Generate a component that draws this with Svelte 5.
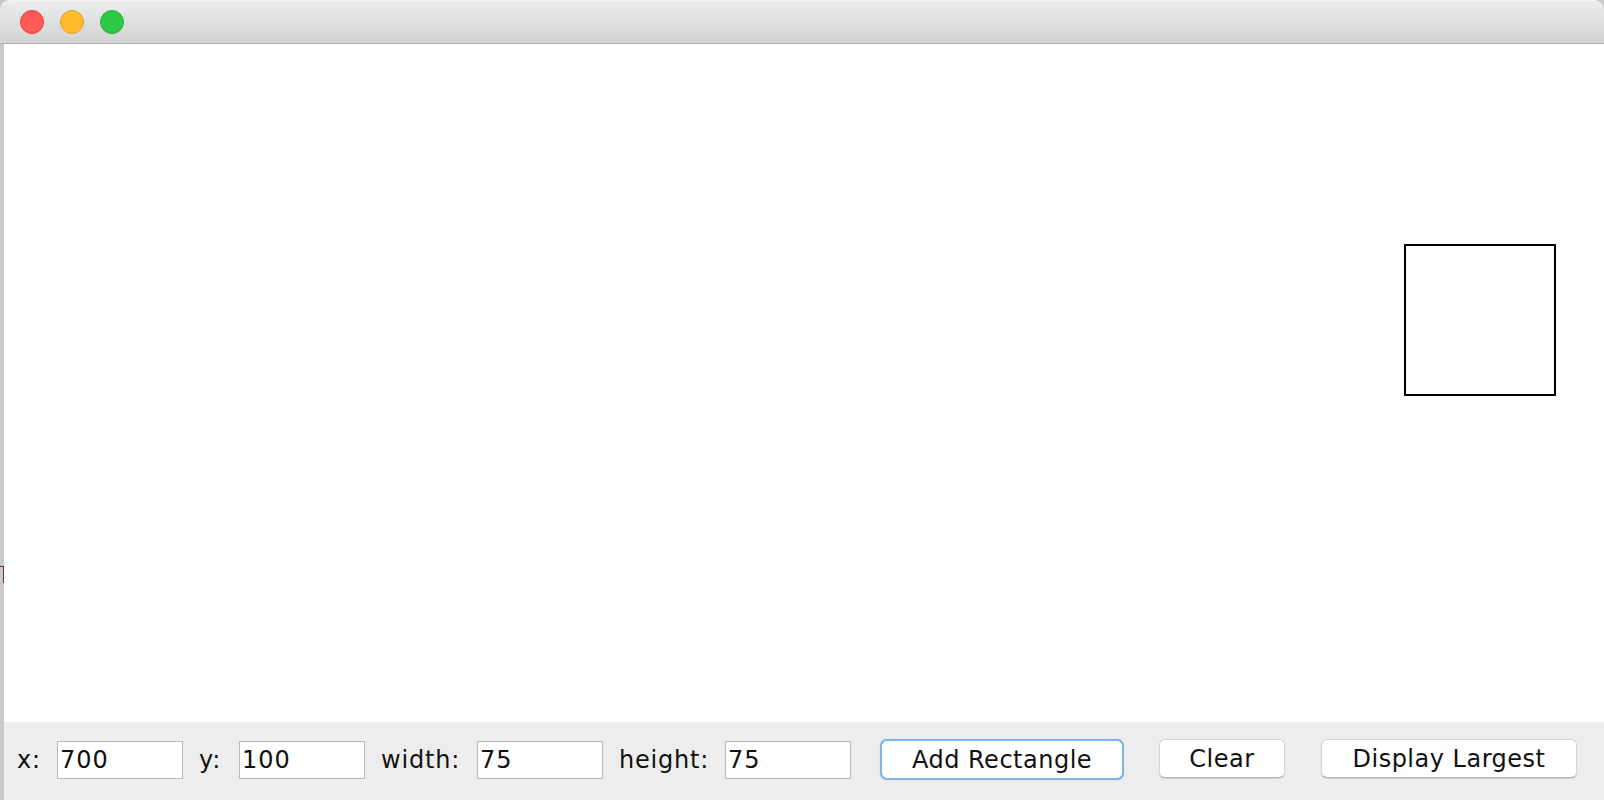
<script>
  let fields = [
    { label: "x:", value: "700", labelWidth: 41 },
    { label: "y:", value: "100", labelWidth: 41 },
    { label: "width:", value: "75", labelWidth: 97 },
    { label: "height:", value: "75", labelWidth: 107 }
  ];
</script>

<div class="window">
  <div class="titlebar">
    <span class="light red"></span>
    <span class="light yellow"></span>
    <span class="light green"></span>
  </div>

  <div class="canvas">
    <div class="shape"></div>
    <div class="stray"></div>
  </div>

  <div class="controls">
    <div class="fields">
      {#each fields as f}
        <label style="width: {f.labelWidth}px">{f.label}</label>
        <input type="text" value={f.value} />
      {/each}
    </div>
    <button class="primary add">Add Rectangle</button>
    <button class="clear">Clear</button>
    <button class="largest">Display Largest</button>
  </div>
</div>

<style>
  :global(body) {
    margin: 0;
    background: #fff;
  }

  .window {
    width: 1604px;
    height: 800px;
    display: flex;
    flex-direction: column;
    box-sizing: border-box;
    padding-left: 4px;
    background: #c9c9c9;
    font-family: "DejaVu Sans", sans-serif;
    color: #111;
    overflow: hidden;
  }

  .titlebar {
    height: 44px;
    margin-left: -4px;
    display: flex;
    align-items: center;
    gap: 16px;
    padding-left: 20px;
    box-sizing: border-box;
    background: linear-gradient(#ececec, #d2d2d2);
    border-top: 1px solid #f4f4f4;
    border-bottom: 1px solid #b4b4b4;
    border-radius: 10px 10px 0 0;
  }

  .light {
    width: 24px;
    height: 24px;
    border-radius: 50%;
    box-sizing: border-box;
  }

  .red {
    background: #fc5b57;
    border: 1px solid #e5443f;
  }

  .yellow {
    background: #fdbb2d;
    border: 1px solid #e3a224;
  }

  .green {
    background: #2fc844;
    border: 1px solid #27aa36;
  }

  .canvas {
    flex: 1;
    position: relative;
    background: #fff;
  }

  .shape {
    position: absolute;
    left: 1400px;
    top: 200px;
    width: 152px;
    height: 152px;
    box-sizing: border-box;
    border: 2px solid #000;
  }

  .stray {
    position: absolute;
    left: -4px;
    top: 522px;
    width: 4px;
    height: 17px;
    box-sizing: border-box;
    border-top: 1px solid #6d2a55;
    border-right: 1px solid #6d2a55;
  }

  .controls {
    height: 78px;
    display: flex;
    align-items: flex-start;
    background: #ededed;
    padding-top: 17px;
    box-sizing: border-box;
    font-size: 24px;
    letter-spacing: 0.5px;
  }

  .fields {
    display: flex;
    align-items: center;
    padding-left: 13px;
    margin-top: 2px;
  }

  label {
    display: block;
    white-space: nowrap;
    margin-right: -1px;
    letter-spacing: 0.8px;
  }

  .fields input + label {
    margin-left: 16px;
  }

  input {
    width: 126px;
    height: 38px;
    box-sizing: border-box;
    border: 1px solid #b8b8b8;
    background: #fff;
    padding: 0 2px;
    font: inherit;
    letter-spacing: 1px;
    color: #111;
    outline: none;
  }

  button {
    height: 39px;
    padding: 0;
    box-sizing: border-box;
    background: #fff;
    border: 1px solid #d4d4d4;
    border-bottom-color: #b5b5b5;
    border-radius: 6px;
    box-shadow: 0 1px 1px rgba(0, 0, 0, 0.12);
    font: inherit;
    letter-spacing: inherit;
    color: #111;
  }

  .primary {
    border: 2px solid #7fb3ea;
    height: 41px;
    border-radius: 7px;
    box-shadow: 0 0 1px #7fb3ea;
  }

  .add {
    width: 244px;
    margin-left: 29px;
  }

  .clear {
    width: 126px;
    margin-left: 35px;
  }

  .largest {
    width: 256px;
    margin-left: 36px;
  }
</style>
